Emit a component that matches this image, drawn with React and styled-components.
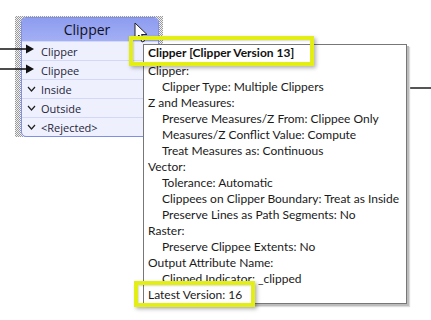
import React from "react";
import styled, { createGlobalStyle } from "styled-components";

const Global = createGlobalStyle`
  html, body { margin: 0; padding: 0; background: #fff; }
  body { font-family: Lato, "Open Sans", sans-serif; }
`;

const Canvas = styled.div`
  position: relative;
  width: 431px;
  height: 320px;
  overflow: hidden;
  background: #fff;
`;

const Wires = styled.svg`
  position: absolute;
  left: 0;
  top: 0;
  width: 431px;
  height: 320px;
  z-index: 2;
  pointer-events: none;
`;

const Selection = styled.div`
  position: absolute;
  left: 15px;
  top: 16px;
  width: 148px;
  height: 121px;
  background: repeating-conic-gradient(#9a9a9a 0 25%, #f2f2f2 0 50%) 0 0 / 2px 2px;
  z-index: 0;
`;

const Node = styled.div`
  position: absolute;
  left: 21px;
  top: 17px;
  width: 136px;
  display: flex;
  flex-direction: column;
  border: 1px solid #7f8fe6;
  border-radius: 5px;
  overflow: hidden;
  background: #eef0fd;
  z-index: 1;
`;

const Header = styled.div`
  height: 23px;
  display: flex;
  align-items: center;
  justify-content: center;
  background: linear-gradient(#8d9cef, #a3aff5);
  font-family: "Open Sans", sans-serif;
  font-size: 14px;
  font-weight: 500;
  color: #10101c;
  padding-right: 6px;
`;

const Port = styled.div`
  height: 18px;
  display: flex;
  align-items: center;
  border-top: 1px solid #d2d8f6;
  font-family: "Open Sans", sans-serif;
  font-size: 11px;
  color: #1e1e3a;
`;

const PortIcon = styled.span`
  width: 19px;
  display: flex;
  justify-content: center;
  align-items: center;
`;

const Tooltip = styled.div`
  position: absolute;
  left: 143px;
  top: 44px;
  width: 258px;
  height: 258px;
  padding-left: 4px;
  background: #fff;
  border: 1px solid #777;
  box-shadow: 2px 2px 0 #bcbcbc, 3px 3px 1px #dcdcdc;
  font-family: Lato, sans-serif;
  font-size: 12px;
  color: #1a1a1a;
  z-index: 3;
`;

const Title = styled.div`
  line-height: 16px;
  font-weight: 700;
  margin: 0 0 2px;
  color: #111;
`;

const Line = styled.div`
  line-height: 16px;
  padding-left: ${(p) => (p.$indent ? 14 : 0)}px;
  white-space: nowrap;
`;

const Highlight = styled.div`
  position: absolute;
  left: ${(p) => p.$x}px;
  top: ${(p) => p.$y}px;
  width: ${(p) => p.$w}px;
  height: ${(p) => p.$h}px;
  box-sizing: border-box;
  border: 4px solid #e2ee14;
  box-shadow: 2px 2px 4px rgba(0, 0, 0, 0.3), inset 1px 1px 2px rgba(0, 0, 0, 0.15);
  z-index: 5;
  pointer-events: none;
`;

const Cursor = styled.svg`
  position: absolute;
  left: 134px;
  top: 22px;
  z-index: 4;
`;

const Chevron = () => (
  <svg width="9" height="6" viewBox="0 0 9 6">
    <path d="M1 1 L4.5 5 L8 1" fill="none" stroke="#222" strokeWidth="1.2" />
  </svg>
);

const ports = [
  { name: "Clipper", input: true },
  { name: "Clippee", input: true },
  { name: "Inside" },
  { name: "Outside" },
  { name: "<Rejected>" },
];

const lines = [
  ["Clipper:", false],
  ["Clipper Type: Multiple Clippers", true],
  ["Z and Measures:", false],
  ["Preserve Measures/Z From: Clippee Only", true],
  ["Measures/Z Conflict Value: Compute", true],
  ["Treat Measures as: Continuous", true],
  ["Vector:", false],
  ["Tolerance: Automatic", true],
  ["Clippees on Clipper Boundary: Treat as Inside", true],
  ["Preserve Lines as Path Segments: No", true],
  ["Raster:", false],
  ["Preserve Clippee Extents: No", true],
  ["Output Attribute Name:", false],
  ["Clipped Indicator: _clipped", true],
  ["Latest Version: 16", false],
];

export default function App() {
  return (
    <>
      <Global />
      <Canvas>
        <Selection />
        <Node>
          <Header>Clipper</Header>
          {ports.map((p) => (
            <Port key={p.name}>
              <PortIcon>{p.input ? null : <Chevron />}</PortIcon>
              {p.name}
            </Port>
          ))}
        </Node>
        <Wires viewBox="0 0 431 320">
          <line x1="0" y1="49" x2="28" y2="49" stroke="#111" strokeWidth="1.5" />
          <path d="M26 44.5 L34 49 L26 53.5 Z" fill="#111" />
          <line x1="0" y1="69" x2="28" y2="69" stroke="#111" strokeWidth="1.5" />
          <path d="M26 64.5 L34 69 L26 73.5 Z" fill="#111" />
          <line x1="405" y1="88" x2="431" y2="88" stroke="#555" strokeWidth="2" />
        </Wires>
        <Cursor width="14" height="22" viewBox="0 0 14 22">
          <path
            d="M1 1 L1 17 L5 13 L8 20 L10.5 19 L7.5 12.5 L13 12.5 Z"
            fill="#fff"
            stroke="#222"
            strokeWidth="1"
            strokeLinejoin="round"
          />
        </Cursor>
        <Tooltip>
          <Title>Clipper [Clipper Version 13]</Title>
          {lines.map(([t, indent]) => (
            <Line key={t} $indent={indent}>
              {t}
            </Line>
          ))}
        </Tooltip>
        <Highlight $x={129} $y={36} $w={185} $h={30} />
        <Highlight $x={134} $y={281} $w={121} $h={26} />
      </Canvas>
    </>
  );
}
